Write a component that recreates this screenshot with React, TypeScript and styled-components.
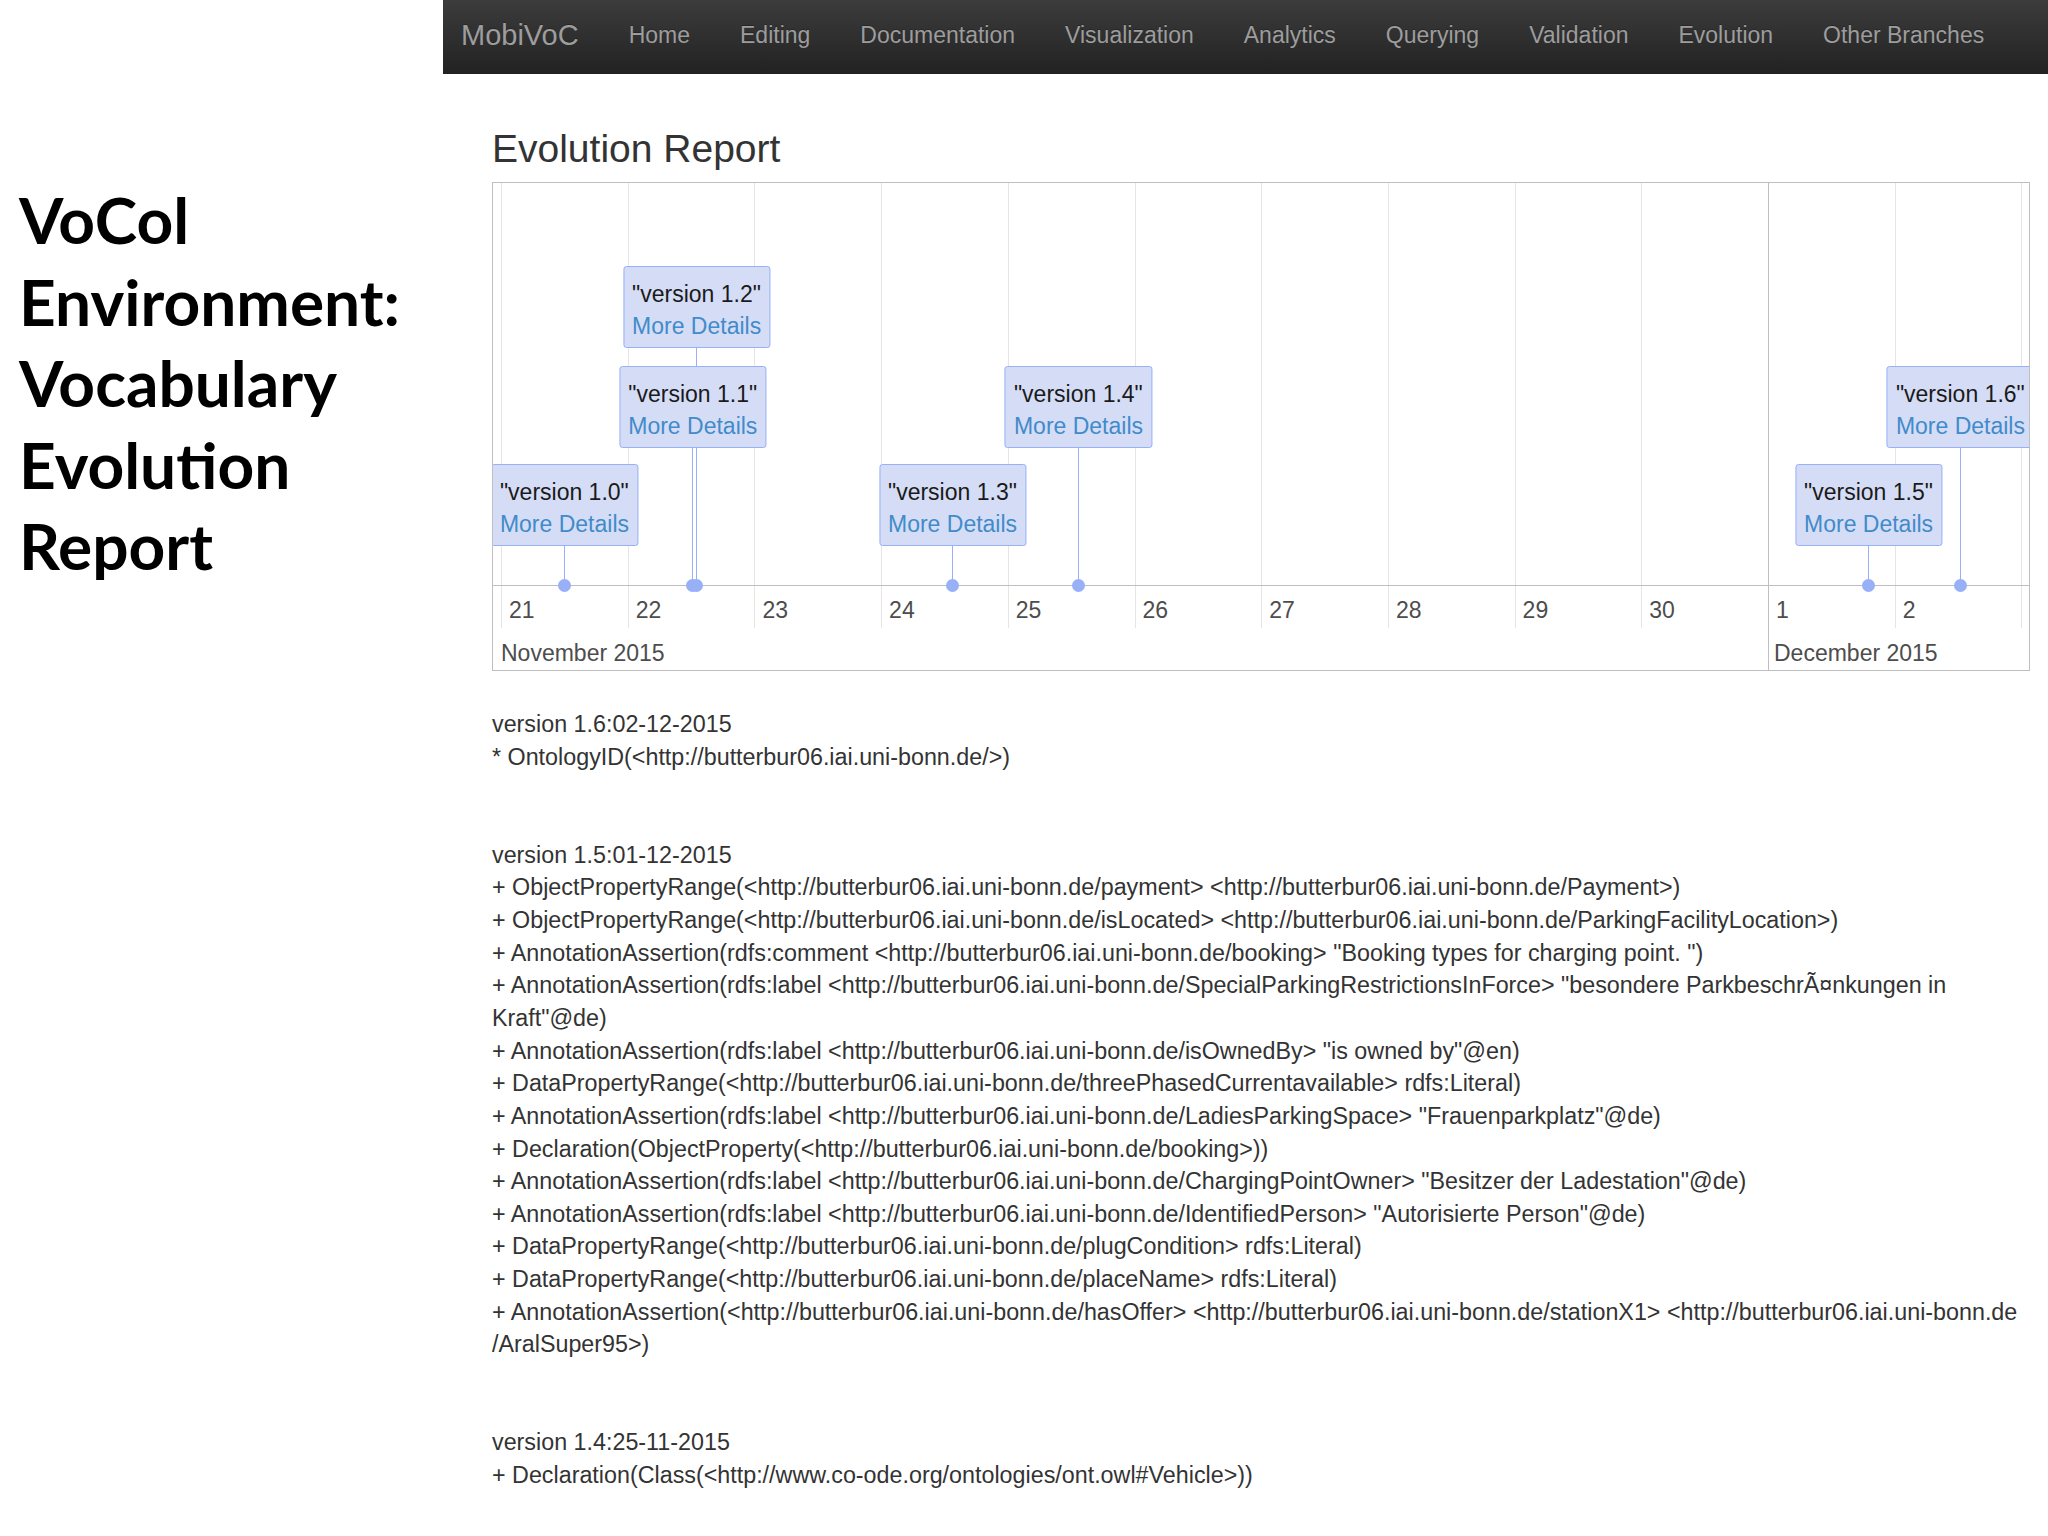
import React from 'react';
import styled, { createGlobalStyle } from 'styled-components';

const GlobalStyle = createGlobalStyle`
  html, body {
    margin: 0;
    padding: 0;
    background: #fff;
  }
  body {
    font-family: "Liberation Sans", Arial, Helvetica, sans-serif;
    color: #333;
  }
`;

// timeline geometry (px inside the timeline box)
const DAY_WIDTH = 126.7;
const FIRST_DAY_X = 8;
const AXIS_Y = 402;
const ITEM_HEIGHT = 82;
const ROW_TOPS = [281, 183, 83];

const days = ['21', '22', '23', '24', '25', '26', '27', '28', '29', '30', '1', '2', '3'];

const months = [
  { label: 'November 2015', day: 0, major: false },
  { label: 'December 2015', day: 10, major: true },
];

const versions = [
  { label: 'version 1.0', day: 0.497, row: 0 },
  { label: 'version 1.1', day: 1.51, row: 1 },
  { label: 'version 1.2', day: 1.54, row: 2 },
  { label: 'version 1.3', day: 3.56, row: 0 },
  { label: 'version 1.4', day: 4.554, row: 1 },
  { label: 'version 1.5', day: 10.79, row: 0 },
  { label: 'version 1.6', day: 11.515, row: 1 },
];

const navItems = [
  'Home',
  'Editing',
  'Documentation',
  'Visualization',
  'Analytics',
  'Querying',
  'Validation',
  'Evolution',
  'Other Branches',
];

const B = 'http://butterbur06.iai.uni-bonn.de/';

const report = [
  {
    title: 'version 1.6:02-12-2015',
    lines: [[`* OntologyID(<${B}>)`]],
  },
  {
    title: 'version 1.5:01-12-2015',
    lines: [
      [`+ ObjectPropertyRange(<${B}payment> <${B}Payment>)`],
      [`+ ObjectPropertyRange(<${B}isLocated> <${B}ParkingFacilityLocation>)`],
      [`+ AnnotationAssertion(rdfs:comment <${B}booking> "Booking types for charging point. ")`],
      [
        `+ AnnotationAssertion(rdfs:label <${B}SpecialParkingRestrictionsInForce> "besondere ParkbeschrÃ¤nkungen in`,
        'Kraft"@de)',
      ],
      [`+ AnnotationAssertion(rdfs:label <${B}isOwnedBy> "is owned by"@en)`],
      [`+ DataPropertyRange(<${B}threePhasedCurrentavailable> rdfs:Literal)`],
      [`+ AnnotationAssertion(rdfs:label <${B}LadiesParkingSpace> "Frauenparkplatz"@de)`],
      [`+ Declaration(ObjectProperty(<${B}booking>))`],
      [`+ AnnotationAssertion(rdfs:label <${B}ChargingPointOwner> "Besitzer der Ladestation"@de)`],
      [`+ AnnotationAssertion(rdfs:label <${B}IdentifiedPerson> "Autorisierte Person"@de)`],
      [`+ DataPropertyRange(<${B}plugCondition> rdfs:Literal)`],
      [`+ DataPropertyRange(<${B}placeName> rdfs:Literal)`],
      [
        `+ AnnotationAssertion(<${B}hasOffer> <${B}stationX1> <http://butterbur06.iai.uni-bonn.de`,
        '/AralSuper95>)',
      ],
    ],
  },
  {
    title: 'version 1.4:25-11-2015',
    lines: [['+ Declaration(Class(<http://www.co-ode.org/ontologies/ont.owl#Vehicle>))']],
  },
];

const dayX = (day: number) => FIRST_DAY_X + day * DAY_WIDTH;

const Page = styled.div`
  display: flex;
  min-height: 1536px;
  width: 2048px;
  overflow: hidden;
`;

const Sidebar = styled.aside`
  flex: 0 0 443px;
  padding: 179px 0 0 19px;
  box-sizing: border-box;
`;

const SlideTitle = styled.h1`
  margin: 0;
  font-family: Lato, "Open Sans", sans-serif;
  font-weight: 700;
  font-size: 64px;
  line-height: 81.5px;
  color: #000;
`;

const Main = styled.main`
  flex: 1;
  min-width: 0;
`;

const NavBar = styled.nav`
  display: flex;
  align-items: center;
  height: 74px;
  padding: 0 0 3px 18px;
  box-sizing: border-box;
  background: linear-gradient(to bottom, #3c3c3c 0%, #222 100%);
`;

const Brand = styled.span`
  font-size: 29px;
  color: #9d9d9d;
  padding-right: 25px;
  text-shadow: 0 -1px 0 rgba(0, 0, 0, 0.25);
`;

const NavLink = styled.span`
  font-size: 23px;
  color: #9d9d9d;
  padding: 0 25px;
  text-shadow: 0 -1px 0 rgba(0, 0, 0, 0.25);
`;

const Content = styled.div`
  padding: 0 18px 40px 49px;
`;

const PageHeading = styled.h3`
  margin: 53px 0 12px;
  font-size: 39px;
  font-weight: 400;
  line-height: 43px;
  color: #333;
`;

const Timeline = styled.div`
  position: relative;
  height: 489px;
  border: 1px solid #bfbfbf;
  box-sizing: border-box;
  overflow: hidden;
  background: #fff;
`;

const GridLine = styled.div<{ $major?: boolean }>`
  position: absolute;
  top: 0;
  width: 1px;
  height: ${p => (p.$major ? '100%' : '445px')};
  background: ${p => (p.$major ? '#bfbfbf' : '#e5e5e5')};
`;

const Axis = styled.div`
  position: absolute;
  left: 0;
  right: 0;
  top: ${AXIS_Y}px;
  height: 1px;
  background: #bfbfbf;
`;

const DayLabel = styled.span`
  position: absolute;
  top: 411px;
  font-size: 23px;
  line-height: 32px;
  color: #4d4d4d;
  white-space: nowrap;
`;

const MonthLabel = styled(DayLabel)`
  top: 454px;
`;

const Connector = styled.div`
  position: absolute;
  width: 1px;
  background: #97b0f8;
`;

const Dot = styled.div`
  position: absolute;
  top: ${AXIS_Y - 6}px;
  width: 13px;
  height: 13px;
  margin-left: -6px;
  border-radius: 50%;
  background: #97b0f8;
`;

const ItemBox = styled.div`
  position: absolute;
  height: ${ITEM_HEIGHT}px;
  box-sizing: border-box;
  padding: 11px 8px 5px;
  transform: translateX(-50%);
  background: #d5ddf6;
  border: 1px solid #97b0f8;
  border-radius: 3px;
  font-size: 23px;
  line-height: 32px;
  color: #1a1a1a;
  white-space: nowrap;
`;

const ItemTitle = styled.div``;

const MoreLink = styled.a`
  display: block;
  color: #428bca;
  text-decoration: none;
`;

const Report = styled.div`
  margin-top: 37px;
  font-size: 23.3px;
  line-height: 32.65px;
  color: #333;
`;

const Section = styled.section`
  margin-bottom: 65.3px;
`;

const Line = styled.div`
  white-space: nowrap;
`;

const EvolutionTimeline: React.FC = () => (
  <Timeline>
    {days.map((d, i) => (
      <GridLine key={`g${d}`} $major={i === 10} style={{ left: dayX(i) }} />
    ))}
    <Axis />
    {days.map((d, i) => (
      <DayLabel key={`d${d}`} style={{ left: dayX(i) + 8 }}>
        {d}
      </DayLabel>
    ))}
    {months.map(m => (
      <MonthLabel key={m.label} style={{ left: dayX(m.day) + (m.major ? 6 : 0) }}>
        {m.label}
      </MonthLabel>
    ))}
    {versions.map(v => {
      const top = ROW_TOPS[v.row] + ITEM_HEIGHT;
      return (
        <Connector
          key={`c${v.label}`}
          style={{ left: dayX(v.day), top, height: AXIS_Y - top }}
        />
      );
    })}
    {versions.map(v => (
      <Dot key={`p${v.label}`} style={{ left: dayX(v.day) }} />
    ))}
    {versions.map(v => (
      <ItemBox key={v.label} style={{ left: dayX(v.day) + 0.5, top: ROW_TOPS[v.row] }}>
        <ItemTitle>"{v.label}"</ItemTitle>
        <MoreLink href="#">More Details</MoreLink>
      </ItemBox>
    ))}
  </Timeline>
);

const App: React.FC = () => {
  return (
    <>
      <GlobalStyle />
      <Page>
        <Sidebar>
          <SlideTitle>
            VoCol
            <br />
            Environment:
            <br />
            Vocabulary
            <br />
            Evolution
            <br />
            Report
          </SlideTitle>
        </Sidebar>
        <Main>
          <NavBar>
            <Brand>MobiVoC</Brand>
            {navItems.map(item => (
              <NavLink key={item}>{item}</NavLink>
            ))}
          </NavBar>
          <Content>
            <PageHeading>Evolution Report</PageHeading>
            <EvolutionTimeline />
            <Report>
              {report.map(section => (
                <Section key={section.title}>
                  <Line>{section.title}</Line>
                  {section.lines.flat().map((line, i) => (
                    <Line key={i}>{line}</Line>
                  ))}
                </Section>
              ))}
            </Report>
          </Content>
        </Main>
      </Page>
    </>
  );
};

export default App;
